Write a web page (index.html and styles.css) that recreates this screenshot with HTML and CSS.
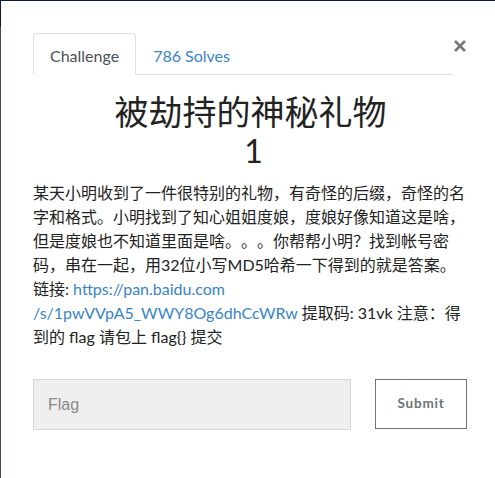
FILE: index.html
```html
<!DOCTYPE html>
<html lang="zh">
<head>
<meta charset="utf-8">
<title>被劫持的神秘礼物</title>
<link rel="stylesheet" href="styles.css">
</head>
<body>
<div class="modal">
  <div class="header">
    <ul class="nav">
      <li class="tab active">Challenge</li>
      <li class="tab link">786 Solves</li>
    </ul>
    <button class="close" aria-label="Close">
      <svg width="14" height="14" viewBox="0 0 14 14"><path d="M2 2 L12 12 M12 2 L2 12" stroke="#777" stroke-width="2.6" stroke-linecap="butt"/></svg>
    </button>
  </div>
  <h2 class="title">被劫持的神秘礼物</h2>
  <div class="value">1</div>
  <p class="desc">某天小明收到了一件很特别的礼物，有奇怪的后缀，奇怪的名字和格式。小明找到了知心姐姐度娘，度娘好像知道这是啥，但是度娘也不知道里面是啥。。。你帮帮小明？找到帐号密码，串在一起，用32位小写MD5哈希一下得到的就是答案。<br>链接: <a href="#">https://pan.baidu.com</a><wbr><a href="#">/s/1pwVVpA5_WWY8Og6dhCcWRw</a> 提取码: 31vk 注意：得到的 flag 请包上 flag{} 提交</p>
  <div class="form">
    <input class="flag" type="text" placeholder="Flag">
    <button class="submit">Submit</button>
  </div>
</div>
</body>
</html>
```
FILE: styles.css
```css
html, body { margin: 0; padding: 0; }
body {
  background: linear-gradient(to bottom, #0b1a3c 0, #0b1a3c 27px, #5e3d4d 27px, #5e3d4d 100%);
  height: 478px;
  overflow: hidden;
  font-family: Lato, "Noto Sans CJK SC", sans-serif;
  color: #2b2b2b;
  text-spacing-trim: space-all;
}
.modal {
  margin: 1px 0 0 1px;
  height: 477px;
  background: #fff;
  padding: 0 27px 0 32px;
  box-sizing: border-box;
}
.header {
  display: flex;
  align-items: flex-start;
  padding-top: 32px;
}
.nav {
  list-style: none;
  margin: 0;
  padding: 0;
  display: flex;
  width: 420px;
  border-bottom: 1px solid #dfdfdf;
}
.tab {
  height: 40px;
  line-height: 43px;
  padding: 0 16px;
  font-size: 16px;
  border: 1px solid transparent;
  border-radius: 4px 4px 0 0;
  margin-bottom: -1px;
}
.tab.active {
  border-color: #dfdfdf #dfdfdf #fff;
  background: #fff;
  color: #4a5058;
}
.tab.link { color: #3a84c8; }
.close {
  margin: 6px 0 0 0;
  padding: 0;
  border: 0;
  background: none;
  width: 14px;
  height: 14px;
  display: block;
}
.close svg { display: block; }
.title {
  margin: 17px 0 0;
  text-align: center;
  font-weight: normal;
  font-size: 34px;
  line-height: 40px;
  color: #222;
  font-family: Lato, "Noto Sans CJK SC", sans-serif;
}
.value {
  text-align: center;
  font-size: 32px;
  line-height: 38px;
  color: #222;
  margin-left: 6px;
}
.desc {
  margin: 11px 0 0;
  font-size: 16px;
  line-height: 24px;
  color: #222;
  width: 434px;
}
.desc a { color: #3a84c8; text-decoration: none; }
.form {
  display: flex;
  gap: 24px;
  margin-top: 30px;
  width: 434px;
}
.flag {
  width: 318px;
  height: 51px;
  box-sizing: border-box;
  background: #efefef;
  border: 1px solid #d2d5da;
  padding: 0 14px;
  font-family: "Liberation Sans", Arial, sans-serif;
  font-size: 16px;
  color: #333;
  outline: none;
}
.flag::placeholder { color: #8a8a8a; }
.submit {
  width: 92px;
  height: 50px;
  box-sizing: border-box;
  background: #fff;
  border: 1px solid #6c737a;
  color: #6c737a;
  font-family: Lato, sans-serif;
  font-weight: bold;
  font-size: 13.5px;
  letter-spacing: 0.8px;
  padding: 0 0 2px;
}
```
